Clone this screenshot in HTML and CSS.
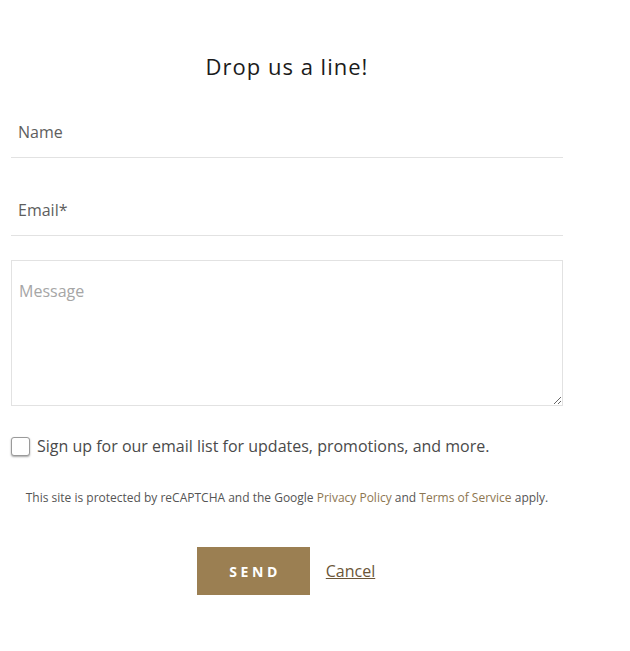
FILE: index.html
```html
<!DOCTYPE html>
<html>
<head>
<meta charset="utf-8">
<link rel="stylesheet" href="styles.css">
</head>
<body>
<form class="form">
  <h2 class="title">Drop us a line!</h2>
  <div class="field"><input class="line-input" type="text" placeholder="Name"></div>
  <div class="field"><input class="line-input" type="email" placeholder="Email*"></div>
  <textarea class="message" placeholder="Message"></textarea>
  <label class="check-row">
    <span class="box"></span>
    <span class="check-text">Sign up for our email list for updates, promotions, and more.</span>
  </label>
  <p class="captcha">This site is protected by reCAPTCHA and the Google <a href="#">Privacy Policy</a> and <a href="#">Terms of Service</a> apply.</p>
  <div class="actions">
    <button type="button" class="send">SEND</button>
    <a href="#" class="cancel">Cancel</a>
  </div>
</form>
</body>
</html>
```

FILE: styles.css
```css
html, body {
  margin: 0;
  padding: 0;
  background: #fff;
}
body {
  font-family: "Open Sans", "Liberation Sans", sans-serif;
}
.form {
  width: 552px;
  margin-left: 11px;
  padding-top: 48px;
  display: flex;
  flex-direction: column;
}
.title {
  margin: 0;
  text-align: center;
  font-size: 22px;
  font-weight: 400;
  letter-spacing: 1px;
  color: #1b1b1b;
  line-height: 36px;
}
.field {
  margin-top: 25px;
}
.field + .field {
  margin-top: 29px;
}
.line-input {
  display: block;
  width: 100%;
  box-sizing: border-box;
  height: 49px;
  border: none;
  border-bottom: 1px solid #e2e2e2;
  padding: 0 7px 2px;
  font-family: inherit;
  font-size: 16px;
  color: #5e5e5e;
  outline: none;
  background: transparent;
}
.line-input::placeholder {
  color: #5e5e5e;
}
.message {
  display: block;
  margin-top: 24px;
  width: 100%;
  box-sizing: border-box;
  height: 146px;
  border: 1px solid #e2e2e2;
  padding: 19px 7px;
  font-family: inherit;
  font-size: 16px;
  color: #5e5e5e;
  resize: vertical;
  outline: none;
}
.message::placeholder {
  color: #a6a6a6;
}
.check-row {
  display: flex;
  align-items: center;
  margin-top: 29px;
  gap: 7px;
}
.box {
  width: 17px;
  height: 17px;
  border: 1px solid #9a9a9a;
  border-radius: 3px;
  box-shadow: 0 1px 2px rgba(0,0,0,0.35);
  flex: none;
  background: #fff;
}
.check-text {
  font-size: 16px;
  color: #4a4a4a;
}
.captcha {
  margin: 32px 0 0;
  text-align: center;
  font-size: 12px;
  color: #555;
  line-height: 18px;
}
.captcha a {
  color: #8d7650;
  text-decoration: none;
}
.actions {
  margin-top: 40px;
  display: flex;
  justify-content: center;
  align-items: center;
  gap: 16px;
}
.send {
  width: 113px;
  height: 48px;
  border: none;
  background: #9b7f52;
  color: #fff;
  font-family: inherit;
  font-weight: 700;
  font-size: 14px;
  letter-spacing: 3.6px;
  padding: 0 0 0 3.6px;
  margin-left: -2px;
}
.cancel {
  color: #6b5638;
  font-size: 16px;
  text-decoration: underline;
}
```
